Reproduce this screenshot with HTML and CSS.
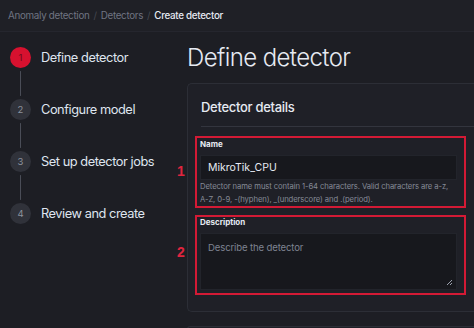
FILE: index.html
```html
<!DOCTYPE html>
<html>
<head>
<meta charset="utf-8">
<link rel="stylesheet" href="styles.css">
</head>
<body>
<header class="crumbs">
  <span class="crumb">Anomaly detection</span><span class="sep">/</span><span class="crumb">Detectors</span><span class="sep">/</span><span class="crumb current">Create detector</span>
</header>
<div class="layout">
  <nav class="steps">
    <div class="step active"><span class="num">1</span><span class="label">Define detector</span></div>
    <div class="line"></div>
    <div class="step"><span class="num">2</span><span class="label">Configure model</span></div>
    <div class="line"></div>
    <div class="step"><span class="num">3</span><span class="label">Set up detector jobs</span></div>
    <div class="line"></div>
    <div class="step"><span class="num">4</span><span class="label">Review and create</span></div>
  </nav>
  <main class="content">
    <h1 class="title">Define detector</h1>
    <section class="panel">
      <h2 class="panel-title">Detector details</h2>
      <div class="field field-name">
        <span class="mark">1</span>
        <label class="field-label">Name</label>
        <div class="input">MikroTik_CPU</div>
        <p class="help">Detector name must contain 1-64 characters. Valid characters are <span class="nowrap">a-z,</span> <span class="nowrap">A-Z,</span> <span class="nowrap">0-9,</span> -(hyphen), _(underscore) and .(period).</p>
      </div>
      <div class="field field-desc">
        <span class="mark">2</span>
        <label class="field-label">Description</label>
        <div class="textarea"><span class="placeholder">Describe the detector</span>
          <svg class="grip" width="7" height="7" viewBox="0 0 7 7"><path d="M6 1 L1 6 M6 4 L4 6" stroke="#9aa0ac" stroke-width="1"/></svg>
        </div>
      </div>
    </section>
    <section class="panel next"></section>
  </main>
</div>
</body>
</html>
```
FILE: styles.css
```css
* { box-sizing: border-box; }
html, body {
  margin: 0;
  padding: 0;
  background: #1d1e24;
  width: 474px;
  height: 328px;
  overflow: hidden;
  font-family: Inter, "Noto Sans", sans-serif;
  color: #dfe5ef;
}
.crumbs {
  height: 32px;
  padding: 0 0 0 8px;
  line-height: 31px;
  font-size: 9.8px;
  letter-spacing: -0.3px;
  color: #6f7482;
  border-bottom: 1px solid #25262e;
  background: #1f2026;
  white-space: nowrap;
}
.crumb.current { color: #e6eaf2; font-weight: 500; }
.sep { margin: 0 4px; color: #454851; }
.layout {
  display: flex;
}
.steps {
  width: 187px;
  flex: none;
  padding: 15px 0 0 10px;
}
.step {
  display: flex;
  align-items: center;
  height: 21px;
}
.num {
  width: 21px;
  height: 21px;
  border-radius: 50%;
  background: #30323a;
  color: #8d929e;
  font-size: 9.5px;
  display: flex;
  align-items: center;
  justify-content: center;
  flex: none;
}
.step.active .num { background: #d7112f; color: #70091a; }
.label {
  margin-left: 10px;
  font-size: 12.8px;
  letter-spacing: -0.45px;
  color: #dfe5ef;
  white-space: nowrap;
}
.line {
  width: 1px;
  height: 31px;
  margin-left: 10px;
  background: #4a4d57;
  transform: scaleY(0.8);
}
.content {
  flex: 1;
  min-width: 0;
}
.title {
  margin: 0;
  padding-top: 10px;
  font-size: 24px;
  font-weight: 300;
  color: #e6eaf2;
  line-height: 32px;
  letter-spacing: -0.6px;
}
.panel {
  margin-top: 9px;
  border: 1px solid #2c2e36;
  border-right: none;
  border-radius: 5px 0 0 5px;
  background: #1f2027;
  padding: 0 0 16px 7px;
}
.panel.next { margin-top: 14px; height: 3px; padding: 0; border-bottom: none; border-radius: 5px 0 0 0; }
.panel-title {
  margin: 0 0 0 6px;
  padding: 14px 0 10px;
  line-height: 18px;
  font-size: 13px;
  letter-spacing: -0.3px;
  font-weight: 500;
  color: #e6eaf2;
  border-bottom: 1px solid #33353e;
}
.field {
  position: relative;
  margin-top: 9px;
  width: 271px;
  border: 2px solid #d31a35;
  padding: 1px 7px 0 3px;
}
.field-desc { margin-top: 7px; padding-top: 0; padding-bottom: 3px; }
.mark {
  position: absolute;
  left: -20px;
  top: 25px;
  color: #e0253f;
  font-family: "Liberation Sans", Arial, sans-serif;
  font-weight: 700;
  font-size: 14px;
  line-height: 16px;
}
.field-desc .mark { top: 27px; }
.field-label {
  display: block;
  font-size: 8px;
  font-weight: 700;
  color: #e6eaf2;
  line-height: 11px;
}
.field-desc .field-label { line-height: 10px; }
.input {
  margin-top: 5px;
  height: 25px;
  background: #17181d;
  border: 1px solid #22242b;
  padding: 0 7px;
  font-size: 10.5px;
  line-height: 23px;
  color: #e6eaf2;
}
.help {
  margin: 1px -2px 0 0;
  font-size: 7.7px;
  letter-spacing: -0.1px;
  line-height: 12.5px;
  color: #858a96;
}
.nowrap { white-space: nowrap; }
.textarea {
  position: relative;
  margin-top: 6px;
  height: 57px;
  background: #17181d;
  border: 1px solid #22242b;
  padding: 8px 7px;
  font-size: 9.6px;
  letter-spacing: -0.15px;
}
.placeholder { color: #7e8391; }
.grip { position: absolute; right: 3px; bottom: 3px; }
```
